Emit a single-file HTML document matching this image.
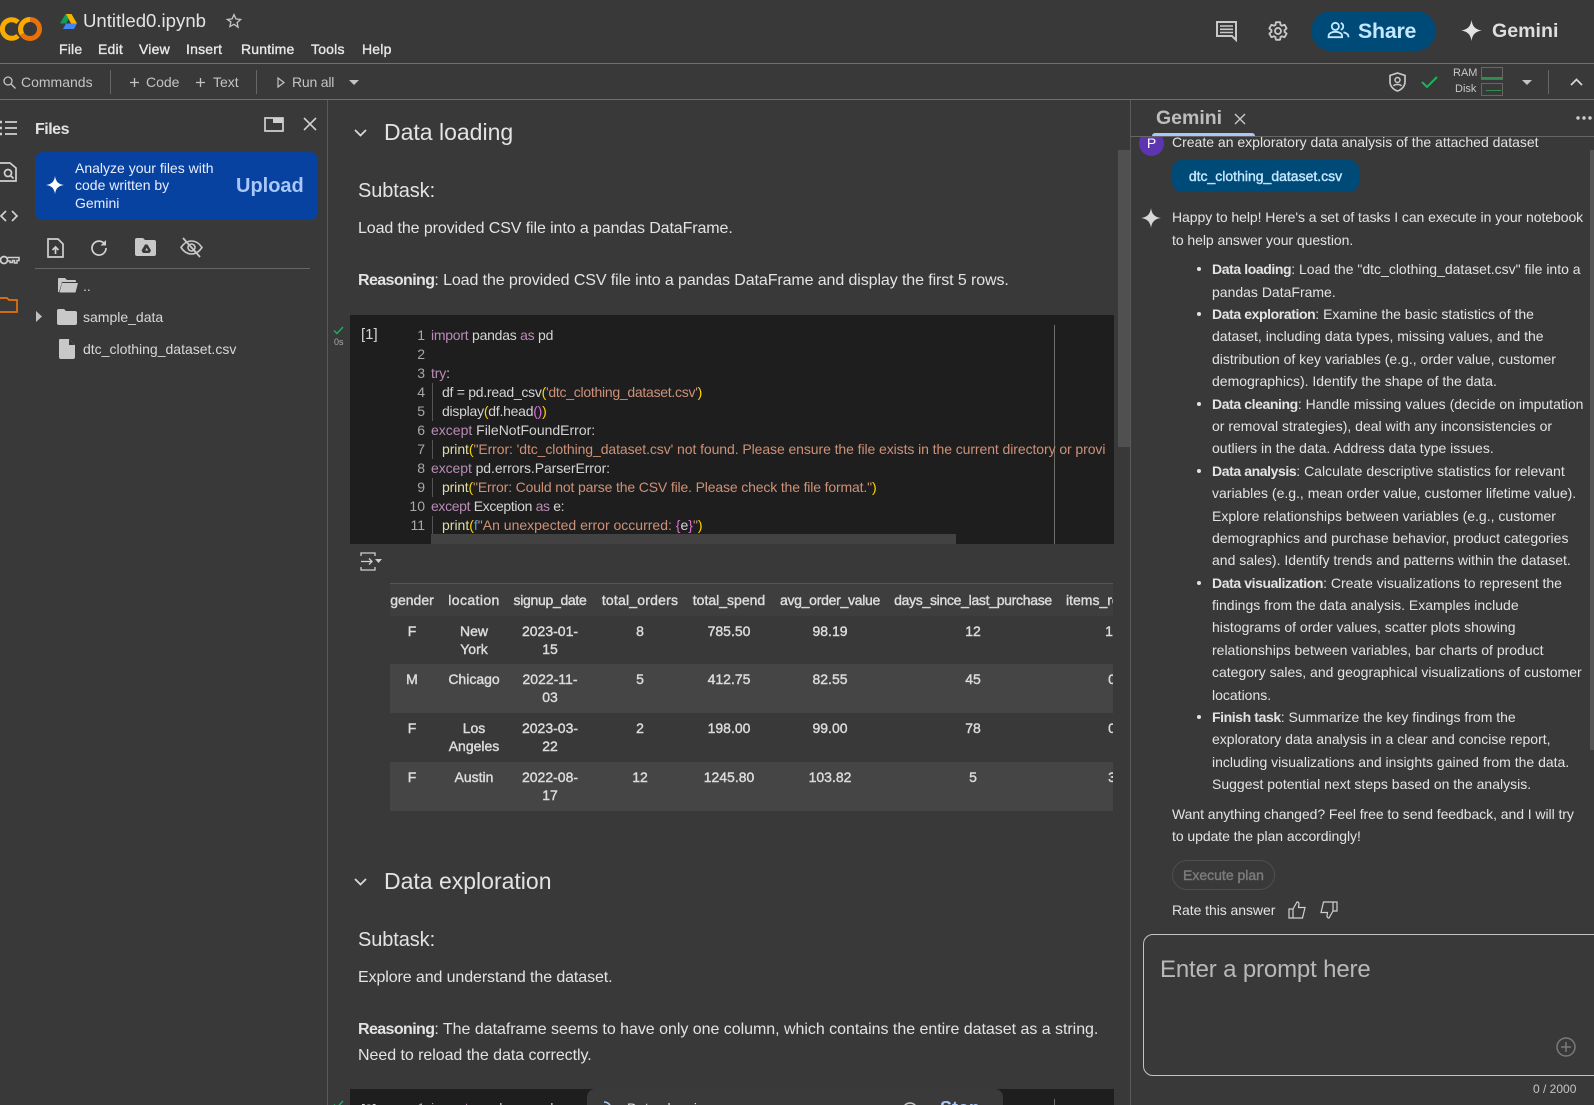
<!DOCTYPE html>
<html><head><meta charset="utf-8"><title>Untitled0.ipynb</title>
<style>
html,body{margin:0;padding:0;width:1594px;height:1105px;overflow:hidden;background:#393939}
body{position:relative;font-family:"Liberation Sans",sans-serif;color:#e3e3e3;font-size:14px}
.t{position:absolute;white-space:nowrap;line-height:20px}
.a{position:absolute}
svg{position:absolute;overflow:visible}
b{font-weight:700}
.cd{font-size:14px;left:431px;color:#d4d4d4;line-height:19px;letter-spacing:-.15px}
.n{position:absolute;left:400px;width:25px;text-align:right;color:#a8a8a8;font-size:14px;line-height:19px}
.k{color:#b98cb5}.s{color:#ce9178}.f{color:#dcdcaa}.y{color:#ffd700}.p{color:#da70d6}.bl{color:#569cd6}
.ig{position:absolute;width:1px;background:#555;left:431px}
.g{left:1172px;color:#e3e3e3;font-size:14px;letter-spacing:-.06px}
.l{left:1212px;font-size:14px;color:#e3e3e3}
.g b,.l b{letter-spacing:-.4px}
.bu{position:absolute;left:1197px;width:4px;height:4px;border-radius:50%;background:#e3e3e3}
.c{position:absolute;transform:translateX(-50%);white-space:nowrap;line-height:20px;font-size:14px;color:#dcdcdc;-webkit-text-stroke:.4px #dcdcdc;margin-top:-1px}
.m{top:39px;font-size:14px;color:#e8e8e8;-webkit-text-stroke:.35px #e8e8e8;letter-spacing:.2px}
.b16{font-size:16px;color:#e3e3e3;letter-spacing:-.1px;left:358px}
.b16 b{letter-spacing:-.6px}
.h1{left:384px;font-size:23px;color:#e3e3e3}
</style></head><body>

<!-- top bar -->
<svg style="left:0;top:14px" width="46" height="30" viewBox="0 0 46 30">
<circle cx="30" cy="15" r="9.500" fill="none" stroke="#e8710a" stroke-width="5"/>
<path d="M30 5.500a9.500 9.500 0 0 0-8 14.500" fill="none" stroke="#f9ab00" stroke-width="5"/>
<path d="M18 8.200A9.300 9.300 0 1 0 18 21.800" fill="none" stroke="#f9ab00" stroke-width="5"/>
</svg>
<svg style="left:60px;top:14px" width="17" height="15" viewBox="0 0 17 15">
<path d="M5.500 0h6l-5.500 9.500H0z" fill="#0f9d58"/><path d="M11.500 0 17 9.500h-6L6 0z" fill="#f4b400"/><path d="M3 15l3-5.500h11L14 15z" fill="#4285f4"/>
</svg>
<div class="t" style="left:83px;top:11px;font-size:18.600px;color:#e3e3e3">Untitled0.ipynb</div>
<svg style="left:226px;top:13px" width="16" height="16" viewBox="0 0 24 24"><path d="M12 2.500l2.900 6.400 7 .8-5.200 4.700 1.400 6.900L12 17l-6.100 3.300 1.400-6.900L2.100 9.700l7-.8z" fill="none" stroke="#c4c4c4" stroke-width="2"/></svg>
<div class="t m" style="left:59px">File</div>
<div class="t m" style="left:98px">Edit</div>
<div class="t m" style="left:139px">View</div>
<div class="t m" style="left:186px">Insert</div>
<div class="t m" style="left:241px">Runtime</div>
<div class="t m" style="left:311px">Tools</div>
<div class="t m" style="left:362px">Help</div>

<svg style="left:1215px;top:20px" width="23" height="22" viewBox="0 0 23 22"><path d="M2 2h19v18l-4-4H2z" fill="none" stroke="#c8c8c8" stroke-width="2"/><path d="M5 6h13M5 9.300h13M5 12.500h13" stroke="#c8c8c8" stroke-width="1.600"/></svg>
<svg style="left:1267px;top:20px" width="22" height="22" viewBox="0 0 24 24"><path d="M19.140 12.940c.04-.3.06-.61.06-.94 0-.32-.02-.64-.07-.94l2.030-1.580c.18-.14.23-.41.12-.61l-1.920-3.320c-.12-.22-.37-.29-.59-.22l-2.390.96c-.5-.38-1.030-.7-1.620-.94l-.36-2.540c-.04-.24-.24-.41-.48-.41h-3.840c-.24 0-.43.17-.47.41l-.36 2.540c-.59.24-1.130.57-1.620.94l-2.390-.96c-.22-.08-.47 0-.59.22L2.740 8.870c-.12.21-.08.47.12.61l2.030 1.580c-.05.3-.09.63-.09.94s.02.64.07.94l-2.030 1.580c-.18.14-.23.41-.12.61l1.920 3.320c.12.22.37.29.59.22l2.390-.96c.5.38 1.030.7 1.620.94l.36 2.540c.05.24.24.41.48.41h3.840c.24 0 .44-.17.47-.41l.36-2.540c.59-.24 1.130-.56 1.620-.94l2.390.96c.22.08.47 0 .59-.22l1.920-3.320c.12-.22.07-.47-.12-.61z" fill="none" stroke="#c8c8c8" stroke-width="2"/><circle cx="12" cy="12" r="3.300" fill="none" stroke="#c8c8c8" stroke-width="2"/></svg>
<div class="a" style="left:1311px;top:11px;width:125px;height:40px;border-radius:20px;background:#004a77"></div>
<svg style="left:1327px;top:21px" width="23" height="18" viewBox="0 0 25 20"><circle cx="9" cy="6" r="4" fill="none" stroke="#c2e7ff" stroke-width="2"/><path d="M1.500 18v-1.500c0-3 4-4.500 7.500-4.500s7.500 1.500 7.500 4.500V18z" fill="none" stroke="#c2e7ff" stroke-width="2"/><path d="M15 2.200a4 4 0 0 1 0 7.600M18 12.500c3 .8 5.500 2 5.500 4.500V18" fill="none" stroke="#c2e7ff" stroke-width="2"/></svg>
<div class="t" style="left:1358px;top:20px;font-size:21.300px;line-height:22px;font-weight:700;color:#c2e7ff;letter-spacing:-.2px">Share</div>
<svg style="left:1461px;top:20px" width="21" height="21" viewBox="0 0 24 24"><path d="M12 0C13 7.500 16.500 11 24 12 16.500 13 13 16.500 12 24 11 16.500 7.500 13 0 12 7.500 11 11 7.500 12 0z" fill="#e3e3e3"/></svg>
<div class="t" style="left:1492px;top:20px;font-size:19.600px;line-height:22px;font-weight:700;color:#dedede">Gemini</div>

<div class="a" style="left:0;top:63px;width:1594px;height:1px;background:#707070"></div>
<div class="a" style="left:0;top:99px;width:1594px;height:1px;background:#707070"></div>

<!-- toolbar -->
<svg style="left:3px;top:76px" width="13" height="13" viewBox="0 0 13 13"><circle cx="5" cy="5" r="4" fill="none" stroke="#c4c4c4" stroke-width="1.300"/><path d="M8 8l4.500 4.500" stroke="#c4c4c4" stroke-width="1.300"/></svg>
<div class="t" style="left:21px;top:72px;color:#c4c4c4">Commands</div>
<div class="a" style="left:110px;top:70px;width:1px;height:24px;background:#666"></div>
<svg style="left:129px;top:77px" width="11" height="11"><path d="M5.500 1v9M1 5.500h9" stroke="#c4c4c4" stroke-width="1.300"/></svg>
<div class="t" style="left:146px;top:72px;color:#c4c4c4">Code</div>
<svg style="left:195px;top:77px" width="11" height="11"><path d="M5.500 1v9M1 5.500h9" stroke="#c4c4c4" stroke-width="1.300"/></svg>
<div class="t" style="left:213px;top:72px;color:#c4c4c4">Text</div>
<div class="a" style="left:256px;top:70px;width:1px;height:24px;background:#666"></div>
<svg style="left:277px;top:77px" width="8" height="11"><path d="M1 1l6 4.500-6 4.500z" fill="none" stroke="#c4c4c4" stroke-width="1.200"/></svg>
<div class="t" style="left:292px;top:72px;color:#c4c4c4;letter-spacing:-.2px">Run all</div>
<svg style="left:349px;top:80px" width="10" height="6"><path d="M0 0h10L5 5z" fill="#c4c4c4"/></svg>

<svg style="left:1389px;top:72px" width="17" height="20" viewBox="0 0 17 20"><path d="M8.500 1L16 3.500v6c0 4.500-3 8-7.500 9.500C4 17.500 1 14 1 9.500v-6z" fill="none" stroke="#c8c8c8" stroke-width="1.700"/><circle cx="8.500" cy="8" r="2.500" fill="none" stroke="#c8c8c8" stroke-width="1.500"/><path d="M4.500 14c1-2 7-2 8 0" fill="none" stroke="#c8c8c8" stroke-width="1.500"/></svg>
<svg style="left:1421px;top:75px" width="17" height="14"><path d="M1 7l5 5L16 2" fill="none" stroke="#1bb55c" stroke-width="2"/></svg>
<div class="t" style="left:1453px;top:63px;font-size:11px;color:#c8c8c8">RAM</div>
<div class="t" style="left:1455px;top:79px;font-size:11px;color:#c8c8c8">Disk</div>
<div class="a" style="left:1481px;top:67px;width:20px;height:11px;border:1px solid #666"></div>
<div class="a" style="left:1482px;top:77px;width:20px;height:2px;background:#2f8f4e"></div>
<div class="a" style="left:1481px;top:83px;width:20px;height:11px;border:1px solid #666"></div>
<div class="a" style="left:1486px;top:90px;width:15px;height:1px;background:#2f8f4e"></div>
<svg style="left:1522px;top:80px" width="10" height="6"><path d="M0 0h10L5 5z" fill="#c4c4c4"/></svg>
<div class="a" style="left:1548px;top:70px;width:1px;height:24px;background:#666"></div>
<svg style="left:1570px;top:78px" width="13" height="8"><path d="M1 7l5.500-5.500L12 7" fill="none" stroke="#d8d8d8" stroke-width="1.700"/></svg>

<!-- left rail -->
<svg style="left:0;top:120px" width="18" height="16"><path d="M5 2h12M5 8h12M5 14h12" stroke="#d0d0d0" stroke-width="1.700"/><path d="M0 2h2M0 8h2M0 14h2" stroke="#d0d0d0" stroke-width="2.500"/></svg>
<svg style="left:0;top:162px" width="17" height="20" viewBox="0 0 17 20"><path d="M0 1h10l6 5v13H0" fill="none" stroke="#d0d0d0" stroke-width="1.700"/><circle cx="8" cy="11" r="3.500" fill="none" stroke="#d0d0d0" stroke-width="1.700"/><path d="M10.500 13.500l3 3" stroke="#d0d0d0" stroke-width="1.700"/></svg>
<svg style="left:0;top:210px" width="18" height="12"><path d="M6 1L1 6l5 5M12 1l5 5-5 5" fill="none" stroke="#d0d0d0" stroke-width="1.700"/></svg>
<svg style="left:0;top:254px" width="20" height="12" viewBox="0 0 20 12"><circle cx="4" cy="6" r="3.500" fill="none" stroke="#d0d0d0" stroke-width="1.700"/><path d="M7.500 3.500H19v3h-2v2.500h-2.500V6.500h-2v2H10V7H7.500" fill="none" stroke="#d0d0d0" stroke-width="1.500"/></svg>
<svg style="left:0;top:297px" width="18" height="16"><path d="M0 1h7l2 2h8v12H0" fill="none" stroke="#e8710a" stroke-width="1.700"/></svg>

<!-- files panel -->
<div class="a" style="left:327px;top:100px;width:1px;height:1005px;background:#5a5a5a"></div>
<div class="t" style="left:35px;top:120px;font-size:16px;font-weight:700;color:#e3e3e3;letter-spacing:-.5px">Files</div>
<svg style="left:264px;top:117px" width="20" height="15"><path d="M1 1h18v13H1z" fill="none" stroke="#d0d0d0" stroke-width="1.700"/><path d="M9 1h10v5H9z" fill="#d0d0d0"/></svg>
<svg style="left:303px;top:117px" width="14" height="14"><path d="M1 1l12 12M13 1L1 13" stroke="#d0d0d0" stroke-width="1.600"/></svg>
<div class="a" style="left:35px;top:152px;width:283px;height:68px;border-radius:8px;background:#0842a0"></div>
<svg style="left:46px;top:176px" width="18" height="18" viewBox="0 0 24 24"><path d="M12 0C13 7.500 16.500 11 24 12 16.500 13 13 16.500 12 24 11 16.500 7.500 13 0 12 7.500 11 11 7.500 12 0z" fill="#fff"/></svg>
<div class="t" style="left:75px;top:158px;color:#e8eefc">Analyze your files with</div>
<div class="t" style="left:75px;top:175px;color:#e8eefc">code written by</div>
<div class="t" style="left:75px;top:193px;color:#e8eefc">Gemini</div>
<div class="t" style="left:236px;top:176px;font-size:20px;font-weight:700;color:#a8c7fa">Upload</div>

<svg style="left:47px;top:238px" width="17" height="20" viewBox="0 0 17 20"><path d="M1 1h10l5 5v13H1z" fill="none" stroke="#d0d0d0" stroke-width="1.700"/><path d="M8.500 16V9M5.500 12l3-3 3 3" fill="none" stroke="#d0d0d0" stroke-width="1.700"/></svg>
<svg style="left:90px;top:239px" width="18" height="18" viewBox="0 0 18 18"><path d="M15 5.500A7 7 0 1 0 16 9" fill="none" stroke="#d0d0d0" stroke-width="1.700"/><path d="M16 1v5.500h-5.500" fill="#d0d0d0"/></svg>
<svg style="left:135px;top:238px" width="21" height="18" viewBox="0 0 21 18"><path d="M0 2q0-2 2-2h6l2 2h9q2 0 2 2v12q0 2-2 2H2q-2 0-2-2z" fill="#c8c8c8"/><path d="M6.500 12.500L10 6.500h2.500l3.500 6-1.500 2.500H8zM10.200 12.500h3l-1.500-2.600z" fill="#393939" fill-rule="evenodd"/></svg>
<svg style="left:180px;top:237px" width="23" height="21" viewBox="0 0 23 21"><path d="M1 10.500C4 6 7.500 4 11.500 4s7.500 2 10.500 6.500c-3 4.500-6.500 6.500-10.500 6.500S4 15 1 10.500z" fill="none" stroke="#c8c8c8" stroke-width="1.600"/><circle cx="11.500" cy="10.500" r="3.500" fill="none" stroke="#c8c8c8" stroke-width="1.600"/><path d="M3 1l17 19" stroke="#c8c8c8" stroke-width="1.800"/></svg>
<div class="a" style="left:35px;top:268px;width:275px;height:1px;background:#666"></div>

<svg style="left:57px;top:277px" width="22" height="16" viewBox="0 0 22 16"><path d="M1 2q0-1 1-1h6l2 2h8q1 0 1 1v1H5L2 15H1z" fill="#c8c8c8"/><path d="M5 6h16l-2.500 9.500H2.500z" fill="#c8c8c8"/></svg>
<div class="t" style="left:83px;top:276px;color:#d0d0d0">..</div>
<svg style="left:36px;top:311px" width="6" height="11"><path d="M0 0l6 5.500L0 11z" fill="#c0c0c0"/></svg>
<svg style="left:57px;top:309px" width="20" height="16" viewBox="0 0 20 16"><path d="M0 2q0-2 2-2h5l2 2h9q2 0 2 2v10q0 2-2 2H2q-2 0-2-2z" fill="#c8c8c8"/></svg>
<div class="t" style="left:83px;top:307px;color:#d8d8d8">sample_data</div>
<svg style="left:59px;top:339px" width="16" height="20" viewBox="0 0 16 20"><path d="M1 0h9l6 6v12q0 2-2 2H2q-2 0-2-2V1q0-1 1-1z" fill="#c8c8c8"/><path d="M10 0v6h6z" fill="#393939"/></svg>
<div class="t" style="left:83px;top:339px;color:#d8d8d8">dtc_clothing_dataset.csv</div>

<!-- main -->
<svg style="left:354px;top:129px" width="13" height="8"><path d="M1 1l5.500 5.500L12 1" fill="none" stroke="#d8d8d8" stroke-width="1.800"/></svg>
<div class="t h1" style="top:122px">Data loading</div>
<div class="t" style="left:358px;top:181px;font-size:20px;color:#e3e3e3;letter-spacing:-.1px">Subtask:</div>
<div class="t b16" style="top:219px">Load the provided CSV file into a pandas DataFrame.</div>
<div class="t b16" style="top:271px"><b>Reasoning</b>: Load the provided CSV file into a pandas DataFrame and display the first 5 rows.</div>

<div class="a" style="left:350px;top:315px;width:764px;height:229px;background:#1e1e1e;overflow:hidden"></div>
<svg style="left:333px;top:326px" width="11" height="9"><path d="M1 4.500l3 3L10 1" fill="none" stroke="#1bb55c" stroke-width="1.300"/></svg>
<div class="t" style="left:334px;top:332px;font-size:9px;color:#aaa">0s</div>
<div class="t" style="left:361px;top:325px;font-size:15px;color:#d4d4d4">[1]</div>
<div class="ig" style="left:432px;top:383px;height:38px"></div>
<div class="ig" style="left:432px;top:440px;height:19px"></div>
<div class="ig" style="left:432px;top:478px;height:19px"></div>
<div class="ig" style="left:432px;top:516px;height:18px"></div>
<div class="a" style="left:1054px;top:325px;width:1px;height:219px;background:#6e6e6e"></div>
<div class="a" style="left:431px;top:534px;width:525px;height:10px;background:#424242"></div>

<div class="n" style="top:326px">1</div><div class="t cd" style="top:326px;letter-spacing:-.25px"><span class="k">import</span> pandas <span class="k">as</span> pd</div>
<div class="n" style="top:345px">2</div>
<div class="n" style="top:364px">3</div><div class="t cd" style="top:364px"><span class="k">try</span>:</div>
<div class="n" style="top:383px">4</div><div class="t cd" style="top:383px;left:442px;letter-spacing:-.27px">df = pd.read_csv<span class="y">(</span><span class="s">'dtc_clothing_dataset.csv'</span><span class="y">)</span></div>
<div class="n" style="top:402px">5</div><div class="t cd" style="top:402px;left:442px;letter-spacing:-.25px">display<span class="y">(</span>df.head<span class="p">()</span><span class="y">)</span></div>
<div class="n" style="top:421px">6</div><div class="t cd" style="top:421px;letter-spacing:0">  <span class="k">except</span> FileNotFoundError:</div>
<div class="n" style="top:440px">7</div><div class="t cd" style="top:440px;left:442px;letter-spacing:-.08px"><span class="f">print</span><span class="y">(</span><span class="s">"Error: 'dtc_clothing_dataset.csv' not found. Please ensure the file exists in the current directory or provi</span></div>
<div class="n" style="top:459px">8</div><div class="t cd" style="top:459px;letter-spacing:-.08px"><span class="k">except</span> pd.errors.ParserError:</div>
<div class="n" style="top:478px">9</div><div class="t cd" style="top:478px;left:442px"><span class="f">print</span><span class="y">(</span><span class="s">"Error: Could not parse the CSV file. Please check the file format."</span><span class="y">)</span></div>
<div class="n" style="top:497px">10</div><div class="t cd" style="top:497px;letter-spacing:-.35px"><span class="k">except</span> Exception <span class="k">as</span> e:</div>
<div class="n" style="top:516px">11</div><div class="t cd" style="top:516px;left:442px;letter-spacing:0"><span class="f">print</span><span class="y">(</span><span class="bl">f</span><span class="s">"An unexpected error occurred: </span><span class="p">{</span>e<span class="p">}</span><span class="s">"</span><span class="y">)</span></div>

<svg style="left:360px;top:552px" width="22" height="19" viewBox="0 0 22 19"><path d="M1 4V1h14v3M1 15v3h14v-3" fill="none" stroke="#d0d0d0" stroke-width="1.300"/><path d="M1 9.500h11M9 6.500l3 3-3 3" fill="none" stroke="#d0d0d0" stroke-width="1.300"/><path d="M15 7h7l-3.500 4z" fill="#d0d0d0"/></svg>

<!-- table -->
<div class="a" style="left:390px;top:583px;width:723px;height:228px;overflow:hidden">
<div class="a" style="left:0;top:0;width:723px;height:33px;background:#3e3e3e;border-top:1px solid #555;box-sizing:border-box"></div>
<div class="a" style="left:0;top:81px;width:723px;height:49px;background:#454545"></div>
<div class="a" style="left:0;top:179px;width:723px;height:49px;background:#454545"></div>
<div class="c" style="left:22px;top:8px">gender</div><div class="c" style="left:84px;top:8px;letter-spacing:.4px">location</div><div class="c" style="left:160px;top:8px;letter-spacing:-.3px">signup_date</div><div class="c" style="left:250px;top:8px;letter-spacing:.2px">total_orders</div><div class="c" style="left:339px;top:8px">total_spend</div><div class="c" style="left:440px;top:8px;letter-spacing:-.28px">avg_order_value</div><div class="c" style="left:583px;top:8px;letter-spacing:-.3px">days_since_last_purchase</div><div class="c" style="left:676px;top:8px;transform:none">items_returned</div>

<div class="c" style="left:22px;top:39px">F</div><div class="c" style="left:84px;top:39px">New</div><div class="c" style="left:84px;top:57px">York</div><div class="c" style="left:160px;top:39px">2023-01-</div><div class="c" style="left:160px;top:57px">15</div><div class="c" style="left:250px;top:39px">8</div><div class="c" style="left:339px;top:39px">785.50</div><div class="c" style="left:440px;top:39px">98.19</div><div class="c" style="left:583px;top:39px">12</div><div class="c" style="left:719px;top:39px">1</div>

<div class="c" style="left:22px;top:87px">M</div><div class="c" style="left:84px;top:87px">Chicago</div><div class="c" style="left:160px;top:87px">2022-11-</div><div class="c" style="left:160px;top:105px">03</div><div class="c" style="left:250px;top:87px">5</div><div class="c" style="left:339px;top:87px">412.75</div><div class="c" style="left:440px;top:87px">82.55</div><div class="c" style="left:583px;top:87px">45</div><div class="c" style="left:722px;top:87px">0</div>

<div class="c" style="left:22px;top:136px">F</div><div class="c" style="left:84px;top:136px">Los</div><div class="c" style="left:84px;top:154px">Angeles</div><div class="c" style="left:160px;top:136px">2023-03-</div><div class="c" style="left:160px;top:154px">22</div><div class="c" style="left:250px;top:136px">2</div><div class="c" style="left:339px;top:136px">198.00</div><div class="c" style="left:440px;top:136px">99.00</div><div class="c" style="left:583px;top:136px">78</div><div class="c" style="left:722px;top:136px">0</div>

<div class="c" style="left:22px;top:185px">F</div><div class="c" style="left:84px;top:185px">Austin</div><div class="c" style="left:160px;top:185px">2022-08-</div><div class="c" style="left:160px;top:203px">17</div><div class="c" style="left:250px;top:185px">12</div><div class="c" style="left:339px;top:185px">1245.80</div><div class="c" style="left:440px;top:185px">103.82</div><div class="c" style="left:583px;top:185px">5</div><div class="c" style="left:722px;top:185px">3</div>
</div>

<svg style="left:354px;top:878px" width="13" height="8"><path d="M1 1l5.500 5.500L12 1" fill="none" stroke="#d8d8d8" stroke-width="1.800"/></svg>
<div class="t h1" style="top:871px">Data exploration</div>
<div class="t" style="left:358px;top:930px;font-size:20px;color:#e3e3e3;letter-spacing:-.1px">Subtask:</div>
<div class="t b16" style="top:968px">Explore and understand the dataset.</div>
<div class="t b16" style="top:1020px;letter-spacing:-.03px"><b>Reasoning</b>: The dataframe seems to have only one column, which contains the entire dataset as a string.</div>
<div class="t b16" style="top:1046px;letter-spacing:-.05px">Need to reload the data correctly.</div>

<div class="a" style="left:350px;top:1089px;width:764px;height:16px;background:#1e1e1e"></div>
<svg style="left:333px;top:1100px" width="11" height="9"><path d="M1 4.500l3 3L10 1" fill="none" stroke="#1bb55c" stroke-width="1.300"/></svg>
<div class="t" style="left:361px;top:1099px;color:#d4d4d4">[2]</div>
<div class="n" style="top:1099px">1</div>
<div class="t cd" style="top:1099px;letter-spacing:-.25px"><span class="k">import</span> pandas <span class="k">as</span> pd</div>
<div class="a" style="left:1054px;top:1099px;width:1px;height:6px;background:#6e6e6e"></div>
<div class="a" style="left:587px;top:1089px;width:416px;height:30px;border-radius:8px 8px 0 0;background:#3a3a3a"></div>
<svg style="left:600px;top:1101px" width="14" height="14"><path d="M4 1a7 7 0 0 1 7 6" fill="none" stroke="#a8c7fa" stroke-width="1.600"/></svg>
<div class="t" style="left:627px;top:1098px;font-size:14px;color:#e3e3e3">Data cleaning</div>
<svg style="left:902px;top:1102px" width="16" height="16"><circle cx="8" cy="8" r="7" fill="none" stroke="#c8c8c8" stroke-width="1.500"/></svg>
<div class="t" style="left:940px;top:1098px;font-size:18px;font-weight:700;color:#a8c7fa">Stop</div>

<!-- main scrollbar -->
<div class="a" style="left:1118px;top:150px;width:12px;height:297px;background:#505050"></div>
<div class="a" style="left:1130px;top:100px;width:1px;height:1005px;background:#5a5a5a"></div>

<!-- gemini panel -->
<div class="t" style="left:1156px;top:106px;font-size:19.500px;line-height:24px;font-weight:700;color:#bdbdbd">Gemini</div>
<svg style="left:1234px;top:113px" width="12" height="12"><path d="M1 1l10 10M11 1L1 11" stroke="#c8c8c8" stroke-width="1.400"/></svg>
<div class="a" style="left:1152px;top:133px;width:103px;height:3px;border-radius:3px 3px 0 0;background:#a8c7fa"></div>
<div class="a" style="left:1131px;top:136px;width:463px;height:1px;background:#666"></div>
<svg style="left:1576px;top:116px" width="16" height="4"><circle cx="2" cy="2" r="1.700" fill="#d0d0d0"/><circle cx="8" cy="2" r="1.700" fill="#d0d0d0"/><circle cx="14" cy="2" r="1.700" fill="#d0d0d0"/></svg>

<div class="a" style="left:1131px;top:137px;width:40px;height:30px;overflow:hidden"><div class="a" style="left:8px;top:-6px;width:25px;height:25px;border-radius:50%;background:#5e35b1;color:#fff;text-align:center;line-height:25px;font-size:14px">P</div></div>
<div class="t g" style="top:132px;letter-spacing:0">Create an exploratory data analysis of the attached dataset</div>
<div class="a" style="left:1172px;top:160px;width:187px;height:32px;border-radius:10px;background:#004a77;color:#c2e7ff;text-align:center;line-height:32px;font-size:14px;-webkit-text-stroke:.4px #c2e7ff">dtc_clothing_dataset.csv</div>
<svg style="left:1141px;top:208px" width="20" height="20" viewBox="0 0 24 24"><path d="M12 0C13 7.500 16.500 11 24 12 16.500 13 13 16.500 12 24 11 16.500 7.500 13 0 12 7.500 11 11 7.500 12 0z" fill="#d8d8d8"/></svg>
<div class="t g" style="top:207px">Happy to help! Here's a set of tasks I can execute in your notebook</div>
<div class="t g" style="top:230px">to help answer your question.</div>

<div class="bu" style="top:267px"></div><div class="t l" style="top:259px"><b>Data loading</b>: Load the "dtc_clothing_dataset.csv" file into a</div>
<div class="t l" style="top:282px">pandas DataFrame.</div>
<div class="bu" style="top:312px"></div><div class="t l" style="top:304px"><b>Data exploration</b>: Examine the basic statistics of the</div>
<div class="t l" style="top:326px">dataset, including data types, missing values, and the</div>
<div class="t l" style="top:349px">distribution of key variables (e.g., order value, customer</div>
<div class="t l" style="top:371px">demographics). Identify the shape of the data.</div>
<div class="bu" style="top:402px"></div><div class="t l" style="top:394px"><b>Data cleaning</b>: Handle missing values (decide on imputation</div>
<div class="t l" style="top:416px">or removal strategies), deal with any inconsistencies or</div>
<div class="t l" style="top:438px">outliers in the data. Address data type issues.</div>
<div class="bu" style="top:469px"></div><div class="t l" style="top:461px"><b>Data analysis</b>: Calculate descriptive statistics for relevant</div>
<div class="t l" style="top:483px">variables (e.g., mean order value, customer lifetime value).</div>
<div class="t l" style="top:506px">Explore relationships between variables (e.g., customer</div>
<div class="t l" style="top:528px">demographics and purchase behavior, product categories</div>
<div class="t l" style="top:550px">and sales). Identify trends and patterns within the dataset.</div>
<div class="bu" style="top:581px"></div><div class="t l" style="top:573px"><b>Data visualization</b>: Create visualizations to represent the</div>
<div class="t l" style="top:595px">findings from the data analysis. Examples include</div>
<div class="t l" style="top:617px">histograms of order values, scatter plots showing</div>
<div class="t l" style="top:640px">relationships between variables, bar charts of product</div>
<div class="t l" style="top:662px">category sales, and geographical visualizations of customer</div>
<div class="t l" style="top:685px">locations.</div>
<div class="bu" style="top:715px"></div><div class="t l" style="top:707px"><b>Finish task</b>: Summarize the key findings from the</div>
<div class="t l" style="top:729px">exploratory data analysis in a clear and concise report,</div>
<div class="t l" style="top:752px">including visualizations and insights gained from the data.</div>
<div class="t l" style="top:774px">Suggest potential next steps based on the analysis.</div>
<div class="t g" style="top:804px">Want anything changed? Feel free to send feedback, and I will try</div>
<div class="t g" style="top:826px">to update the plan accordingly!</div>

<div class="a" style="left:1172px;top:860px;width:101px;height:28px;border:1px solid #4f4f4f;border-radius:15px;text-align:center;line-height:28px;font-size:14px;color:#7c7c7c;-webkit-text-stroke:.4px #7c7c7c">Execute plan</div>
<div class="t g" style="top:900px">Rate this answer</div>
<svg style="left:1288px;top:901px" width="18" height="18" viewBox="0 0 18 18"><path d="M1 8h4v9H1zM5 8l4-7c1.500 0 2 1 2 2l-.5 3.500H17l-2.500 10.500H5" fill="none" stroke="#d0d0d0" stroke-width="1.200"/></svg>
<svg style="left:1320px;top:901px" width="18" height="18" viewBox="0 0 18 18"><path d="M17 10h-4V1h4zM13 10l-4 7c-1.500 0-2-1-2-2l.5-3.500H1L3.500 1H13" fill="none" stroke="#d0d0d0" stroke-width="1.200"/></svg>

<div class="a" style="left:1143px;top:934px;width:470px;height:140px;border:1px solid #c4c4c4;border-radius:10px"></div>
<div class="t" style="left:1160px;top:958px;font-size:24px;line-height:24px;color:#b8b8b8;letter-spacing:-.15px">Enter a prompt here</div>
<svg style="left:1556px;top:1037px" width="20" height="20"><circle cx="10" cy="10" r="9" fill="none" stroke="#7a7a7a" stroke-width="1.500"/><path d="M10 5v10M5 10h10" stroke="#7a7a7a" stroke-width="1.500"/></svg>
<div class="t" style="left:1533px;top:1079px;font-size:12px;color:#c4c4c4">0 / 2000</div>

<div class="a" style="left:1590px;top:150px;width:4px;height:600px;background:#555"></div>
</body></html>
